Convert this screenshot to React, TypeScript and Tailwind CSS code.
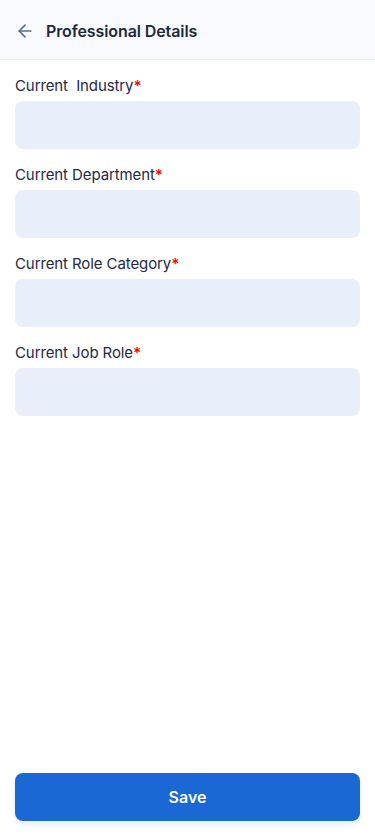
import React from 'react';

const fields = ['Current  Industry', 'Current Department', 'Current Role Category', 'Current Job Role'];

const App: React.FC = () => {
  return (
    <div className="h-[836px] w-full flex flex-col bg-white" style={{ fontFamily: 'Inter, "Noto Sans", sans-serif' }}>
      {/* header */}
      <div className="h-[60px] shrink-0 flex items-center bg-[#f8faff] border-b border-[#e6ebf3] px-[15px] pt-[3px]">
        <svg width="20" height="20" viewBox="0 0 24 24" fill="none" stroke="#5b6b8c" strokeWidth="2" strokeLinecap="round" strokeLinejoin="round">
          <path d="M19 12H5" />
          <path d="M12 19l-7-7 7-7" />
        </svg>
        <h1 className="ml-[11px] text-[16px] font-semibold text-[#1e293b] tracking-[-0.1px]">Professional Details</h1>
      </div>

      {/* form */}
      <div className="flex flex-col gap-4 px-[15px] pt-[16px]">
        {fields.map((f) => (
          <div key={f} className="flex flex-col">
            <label className="h-5 leading-5 text-[15px] text-[#1f2a44] whitespace-pre tracking-[-0.1px]">
              {f}
              <span className="text-[#ff0000] font-semibold">*</span>
            </label>
            <div className="mt-[5px] h-12 rounded-lg bg-[#e8effa]" />
          </div>
        ))}
      </div>

      <div className="flex-1" />

      <div className="px-[15px] pb-[15px]">
        <button className="w-full h-12 rounded-lg bg-[#1a68d4] text-white text-base font-semibold shadow-[0_3px_6px_rgba(26,104,212,0.12)]">
          Save
        </button>
      </div>
    </div>
  );
};

export default App;
